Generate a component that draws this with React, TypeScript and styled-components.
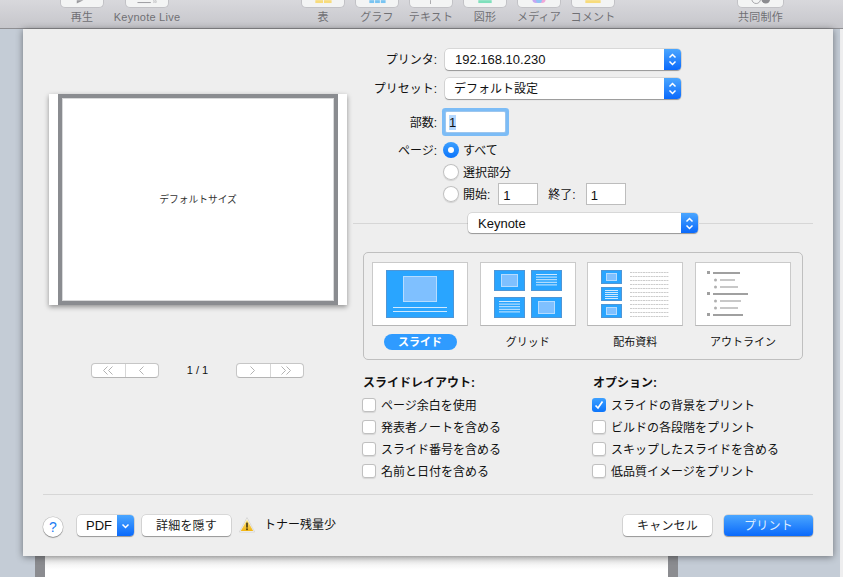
import React from "react";
import styled, { createGlobalStyle } from "styled-components";

const GlobalStyle = createGlobalStyle`
  html, body {
    margin: 0;
    padding: 0;
    width: 843px;
    height: 577px;
    overflow: hidden;
    font-family: "Liberation Sans", "Noto Sans CJK JP", sans-serif;
    font-size: 12px;
    color: #111;
  }
  * {
    box-sizing: border-box;
  }
`;

const Page = styled.div`
  width: 843px;
  height: 577px;
  display: flex;
  flex-direction: column;
  overflow: hidden;
`;

/* Keynote window toolbar, cut off by the top of the screenshot */
const Toolbar = styled.div`
  height: 29px;
  display: flex;
  padding-left: 60px;
  padding-right: 58px;
  background: linear-gradient(#d8d8dc, #c6c6cb);
  border-bottom: 1px solid #8e8e92;
`;

const ToolItem = styled.div<{ $width?: number; $left?: number }>`
  width: ${({ $width }) => $width ?? 44}px;
  margin-left: ${({ $left }) => $left ?? 0}px;
  display: flex;
  flex-direction: column;
  align-items: center;
`;

const ToolButton = styled.div`
  width: 100%;
  height: 8px;
  display: flex;
  justify-content: center;
  background: #f3f4f4;
  border: 1px solid #c2c2c6;
  border-top: none;
  border-radius: 0 0 5px 5px;
  overflow: hidden;
`;

const ToolLabel = styled.span`
  margin-top: 2px;
  font-size: 11px;
  line-height: 14px;
  letter-spacing: 0.25px;
  white-space: nowrap;
  color: #707074;
`;

const Stage = styled.div`
  flex: 1;
  display: flex;
  flex-direction: column;
  background: linear-gradient(to right, #c4ccd6 840px, #eeeeef 840px);
`;

const Dialog = styled.div`
  position: relative;
  z-index: 1;
  width: 810px;
  height: 527px;
  margin-left: 23px;
  padding: 0 20px;
  background: #eeeeee;
  box-shadow: 0 1px 7px rgba(0, 0, 0, 0.45);
`;

const SlidePeek = styled.div`
  width: 643px;
  height: 21px;
  margin-left: 35px;
  background: linear-gradient(#e6e6e6, #ffffff 14px);
  border-left: 10px solid #8b8c90;
  border-right: 10px solid #8b8c90;
`;

const Main = styled.div`
  height: 465px;
  display: flex;
`;

const PreviewColumn = styled.div`
  width: 310px;
  padding-top: 65px;
  padding-left: 6px;
`;

const PreviewSheet = styled.div`
  width: 298px;
  height: 211px;
  padding: 0 9px;
  background: #fff;
  box-shadow: 0 2px 5px rgba(0, 0, 0, 0.4);
`;

const PreviewFrame = styled.div`
  height: 100%;
  padding-bottom: 2px;
  display: flex;
  align-items: center;
  justify-content: center;
  border: 4px solid #8a8c90;
  box-shadow: inset 0 0 0 1px #d9dadb;
  font-size: 9.75px;
  color: #333;
`;

const Pager = styled.div`
  margin-top: 55px;
  margin-left: 42px;
  display: flex;
  align-items: center;
`;

const PagerGroup = styled.div`
  width: 68px;
  height: 15px;
  display: flex;
  background: #fff;
  border: 1px solid #c6c6c6;
  border-bottom-color: #b4b4b4;
  border-radius: 4px;
`;

const PagerButton = styled.div`
  flex: 1;
  display: flex;
  align-items: center;
  justify-content: center;
  & + & {
    border-left: 1px solid #d6d6d6;
  }
`;

const PagerCount = styled.span`
  width: 77px;
  text-align: center;
  font-size: 11px;
  line-height: 20px;
`;

const SettingsColumn = styled.div`
  width: 460px;
  padding-top: 20px;
`;

const FormRow = styled.div<{ $top?: number; $height?: number }>`
  display: grid;
  grid-template-columns: 84px 1fr;
  column-gap: 8px;
  align-items: center;
  height: ${({ $height }) => $height ?? 21}px;
  margin-top: ${({ $top }) => $top ?? 0}px;
`;

const FormLabel = styled.label`
  padding-bottom: 2px;
  text-align: right;
  white-space: nowrap;
`;

const Popup = styled.div<{ $width: number; $height?: number; $size?: number; $inset?: number }>`
  width: ${({ $width }) => $width}px;
  height: ${({ $height }) => $height ?? 21}px;
  display: flex;
  align-items: center;
  justify-content: space-between;
  padding-left: ${({ $inset }) => $inset ?? 10}px;
  background: #fff;
  border-radius: 4px;
  font-size: ${({ $size }) => $size ?? 13}px;
  box-shadow: 0 0 0 0.5px rgba(0, 0, 0, 0.18), 0 1px 1px rgba(0, 0, 0, 0.3);
  overflow: hidden;
`;

/* CJK glyphs sit a pixel low in Noto compared with the reference */
const Lifted = styled.span`
  padding-bottom: 2px;
`;

const PopupStepper = styled.span`
  width: 17px;
  height: 100%;
  display: flex;
  align-items: center;
  justify-content: center;
  background: linear-gradient(#4aa6ff, #0a69fb);
`;

const CopiesField = styled.div`
  width: 59px;
  height: 20px;
  margin-left: 1px;
  padding: 0 3px;
  display: flex;
  align-items: center;
  background: #fff;
  font-size: 13px;
  box-shadow: 0 0 0 1px #9dc6ee, 0 0 0 4px #7cbcf6;
  border-radius: 1px;
`;

const Selected = styled.span`
  background: #b4d7fe;
`;

const RadioRow = styled.div`
  display: flex;
  align-items: center;
  margin-left: -2px;
`;

const Radio = styled.span<{ $on?: boolean }>`
  width: 16px;
  height: 16px;
  flex: none;
  margin-right: 4px;
  display: flex;
  align-items: center;
  justify-content: center;
  border-radius: 50%;
  background: ${({ $on }) => ($on ? "linear-gradient(#3da0ff, #0b74fb)" : "#fff")};
  box-shadow: ${({ $on }) =>
    $on ? "none" : "inset 0 0 0 1px #c0c0c0, 0 1px 1px rgba(0, 0, 0, 0.12)"};
  &::after {
    content: "";
    display: ${({ $on }) => ($on ? "block" : "none")};
    width: 6px;
    height: 6px;
    border-radius: 50%;
    background: #fff;
  }
`;

const RangeField = styled.div`
  width: 40px;
  height: 22px;
  margin-left: 8px;
  padding: 2px 0 0 4px;
  display: flex;
  align-items: center;
  background: #fff;
  border: 1px solid #bdbdbd;
  font-size: 13px;
`;

const RangeLabel = styled.span`
  margin-left: 10px;
  margin-right: 2px;
  padding-bottom: 2px;
`;

const SectionRule = styled.div`
  margin-top: 8px;
  display: flex;
  align-items: center;
  &::before,
  &::after {
    content: "";
    flex: 1;
    height: 1px;
    background: #d6d6d6;
  }
`;

const LayoutBox = styled.div`
  width: 440px;
  height: 108px;
  margin-top: 19px;
  margin-left: 10px;
  padding: 9px 11px 0 8px;
  display: flex;
  justify-content: space-between;
  background: #efefef;
  border: 1px solid #bfbfbf;
  border-radius: 5px;
`;

const LayoutChoice = styled.div`
  width: 96px;
  display: flex;
  flex-direction: column;
  align-items: center;
`;

const Thumb = styled.div`
  width: 96px;
  height: 64px;
  background: #fff;
  border: 1px solid #cacaca;
  border-bottom-color: #b6b6b6;
  svg {
    display: block;
    margin: -1px;
  }
`;

const ChoiceLabel = styled.span<{ $active?: boolean }>`
  width: ${({ $active }) => ($active ? "73px" : "auto")};
  height: 16px;
  margin-top: 8px;
  border-radius: 8px;
  text-align: center;
  font-size: 11px;
  line-height: 17px;
  font-weight: ${({ $active }) => ($active ? 700 : 400)};
  color: ${({ $active }) => ($active ? "#fff" : "#111")};
  background: ${({ $active }) => ($active ? "#2f9bff" : "transparent")};
`;

const OptionGrid = styled.div`
  margin-top: 15px;
  margin-left: 9px;
  display: grid;
  grid-template-columns: 230px 1fr;
`;

const OptionColumn = styled.div`
  display: flex;
  flex-direction: column;
`;

const OptionHeading = styled.div`
  height: 16px;
  margin-bottom: 3px;
  padding-left: 1px;
  font-weight: 700;
  line-height: 16px;
`;

const OptionRow = styled.div`
  height: 22px;
  display: flex;
  align-items: center;
  white-space: nowrap;
`;

const Checkbox = styled.span<{ $on?: boolean }>`
  width: 14px;
  height: 14px;
  flex: none;
  margin-right: 5px;
  display: flex;
  align-items: center;
  justify-content: center;
  border-radius: 3px;
  background: ${({ $on }) => ($on ? "linear-gradient(#3da0ff, #0b74fb)" : "#fff")};
  box-shadow: ${({ $on }) =>
    $on ? "none" : "inset 0 0 0 1px #c0c0c0, 0 1px 1px rgba(0, 0, 0, 0.1)"};
`;

const Footer = styled.div`
  padding-top: 20px;
  display: flex;
  align-items: flex-start;
  border-top: 1px solid #d6d6d6;
`;

const HelpButton = styled.div`
  width: 20px;
  height: 20px;
  margin-top: 2px;
  margin-right: 14px;
  display: flex;
  align-items: center;
  justify-content: center;
  border-radius: 50%;
  background: #fff;
  color: #1c7cf2;
  font-size: 14px;
  box-shadow: 0 0 0 0.5px rgba(0, 0, 0, 0.2), 0 1px 1px rgba(0, 0, 0, 0.3);
`;

const PdfButton = styled.div`
  width: 57px;
  height: 21px;
  display: flex;
  align-items: center;
  justify-content: space-between;
  padding-left: 9px;
  margin-right: 8px;
  background: #fff;
  border-radius: 4px;
  font-size: 13px;
  box-shadow: 0 0 0 0.5px rgba(0, 0, 0, 0.18), 0 1px 1px rgba(0, 0, 0, 0.3);
  overflow: hidden;
`;

const PushButton = styled.div<{ $primary?: boolean; $width: number }>`
  width: ${({ $width }) => $width}px;
  height: 21px;
  padding-bottom: 2px;
  display: flex;
  align-items: center;
  justify-content: center;
  border-radius: 4px;
  letter-spacing: 0.2px;
  color: ${({ $primary }) => ($primary ? "#dcebff" : "#222")};
  background: ${({ $primary }) =>
    $primary ? "linear-gradient(#4aa6ff, #0a69fb)" : "#fff"};
  box-shadow: 0 0 0 0.5px rgba(0, 0, 0, 0.18), 0 1px 1px rgba(0, 0, 0, 0.3);
`;

const WarningIcon = styled.svg`
  margin: 2px 9px 0 8px;
`;

const WarningText = styled.span`
  line-height: 21px;
`;

const FooterSpacer = styled.div`
  flex: 1;
`;

const ButtonGap = styled.div`
  width: 12px;
`;

const UpDown = () => (
  <svg width="9" height="15" viewBox="0 0 9 15" fill="none" stroke="#fff" strokeWidth="1.5">
    <path d="M1.5 5.5 4.5 2.5 7.5 5.5" />
    <path d="M1.5 9.5 4.5 12.5 7.5 9.5" />
  </svg>
);

const Chevrons = ({ dir, count }: { dir: "left" | "right"; count: number }) => (
  <svg width={count === 2 ? 13 : 8} height="9" viewBox={`0 0 ${count === 2 ? 13 : 8} 9`} fill="none" stroke="#b3b3b3">
    {Array.from({ length: count }).map((_, i) => (
      <path
        key={i}
        d={
          dir === "left"
            ? `M${5.5 + i * 5} 0.5 ${1.5 + i * 5} 4.5 ${5.5 + i * 5} 8.5`
            : `M${1.5 + i * 5} 0.5 ${5.5 + i * 5} 4.5 ${1.5 + i * 5} 8.5`
        }
      />
    ))}
  </svg>
);

const SLIDE = { fill: "#29a5ff", stroke: "#4f96d6", image: "#7fc0ff", edge: "#b6dcff" };

const Cell = ({ x, y, w, h }: { x: number; y: number; w: number; h: number }) => (
  <rect x={x + 0.5} y={y + 0.5} width={w - 1} height={h - 1} fill={SLIDE.fill} stroke={SLIDE.stroke} />
);

const Picture = ({ x, y, w, h }: { x: number; y: number; w: number; h: number }) => (
  <rect x={x + 0.5} y={y + 0.5} width={w - 1} height={h - 1} fill={SLIDE.image} stroke={SLIDE.edge} />
);

const TextLines = ({ x, w, from, to, step }: { x: number; w: number; from: number; to: number; step: number }) => {
  const lines: number[] = [];
  for (let y = from; y <= to; y += step) lines.push(y);
  return (
    <>
      {lines.map((y) => (
        <rect key={y} x={x} y={y} width={w} height={1} fill="#cfe9ff" />
      ))}
    </>
  );
};

const SlideThumb = () => (
  <svg width="96" height="64" viewBox="0 0 96 64">
    <Cell x={14} y={8} w={68} h={48} />
    <Picture x={31} y={14} w={34} h={26} />
    <TextLines x={21} w={54} from={45} to={49} step={4} />
  </svg>
);

const GridThumb = () => (
  <svg width="96" height="64" viewBox="0 0 96 64">
    <Cell x={14} y={8} w={31} h={21} />
    <Picture x={21} y={12} w={17} h={13} />
    <Cell x={51} y={8} w={31} h={21} />
    <TextLines x={56} w={21} from={12} to={25} step={2.6} />
    <Cell x={14} y={35} w={31} h={21} />
    <TextLines x={19} w={21} from={39} to={52} step={2.6} />
    <Cell x={51} y={35} w={31} h={21} />
    <Picture x={58} y={39} w={17} h={13} />
  </svg>
);

const HandoutThumb = () => {
  const rows: number[] = [];
  for (let y = 10; y <= 54; y += 4) rows.push(y);
  return (
    <svg width="96" height="64" viewBox="0 0 96 64">
      <Cell x={14} y={8} w={21} h={14} />
      <Picture x={19} y={11} w={11} h={8} />
      <Cell x={14} y={25} w={21} h={14} />
      <TextLines x={18} w={13} from={28} to={36} step={2} />
      <Cell x={14} y={42} w={21} h={14} />
      <Picture x={19} y={45} w={11} h={8} />
      {rows.map((y) => (
        <line key={y} x1={43} x2={82} y1={y + 0.5} y2={y + 0.5} stroke="#cccccc" strokeDasharray="2 0.6" />
      ))}
    </svg>
  );
};

const OUTLINE_MAIN = [
  { y: 9, w: 27 },
  { y: 30, w: 35 },
  { y: 51, w: 30 },
];

const OUTLINE_SUB = [
  { y: 17, w: 15 },
  { y: 24, w: 18 },
  { y: 38, w: 21 },
  { y: 45, w: 18 },
];

const OutlineThumb = () => (
  <svg width="96" height="64" viewBox="0 0 96 64">
    {OUTLINE_MAIN.map(({ y, w }) => (
      <g key={y} fill="#a0a0a0">
        <rect x={12} y={y} width={3} height={3} />
        <rect x={18} y={y + 1} width={w} height={2} />
      </g>
    ))}
    {OUTLINE_SUB.map(({ y, w }) => (
      <g key={y} fill="#c8c8c8">
        <circle cx={20.5} cy={y + 1} r={1.5} fill="#b0b0b0" />
        <rect x={25} y={y} width={w} height={2} />
      </g>
    ))}
  </svg>
);

const TOOLS: { label: string; width?: number; left?: number; glyph: React.ReactNode }[] = [
  {
    label: "再生",
    glyph: (
      <svg width="44" height="8" viewBox="0 0 44 8">
        <path d="M16.5 0h7l-7 3.5z" fill="#9a9a9e" />
      </svg>
    ),
  },
  {
    label: "Keynote Live",
    left: 21,
    glyph: (
      <svg width="44" height="8" viewBox="0 0 44 8">
        <rect x="12" y="2" width="14" height="1" fill="#9a9a9e" />
        <path d="M29 0c.6 1 .6 2 0 3M31 0c.6 1 .6 2 0 3" stroke="#b4b4b8" fill="none" />
      </svg>
    ),
  },
  {
    label: "表",
    left: 132,
    glyph: (
      <svg width="44" height="8" viewBox="0 0 44 8">
        <rect x="14" y="0" width="8" height="3" fill="#f8dc7c" />
        <rect x="23" y="0" width="8" height="3" fill="#f8dc7c" />
      </svg>
    ),
  },
  {
    label: "グラフ",
    left: 10,
    glyph: (
      <svg width="44" height="8" viewBox="0 0 44 8">
        <rect x="14" y="0" width="5" height="3" fill="#78c4f2" />
        <rect x="20" y="0" width="5" height="3" fill="#78c4f2" />
        <rect x="26" y="0" width="5" height="3" fill="#78c4f2" />
      </svg>
    ),
  },
  {
    label: "テキスト",
    left: 10,
    glyph: (
      <svg width="44" height="8" viewBox="0 0 44 8">
        <rect x="21" y="0" width="1" height="4" fill="#a8a8ac" />
      </svg>
    ),
  },
  {
    label: "図形",
    left: 10,
    glyph: (
      <svg width="44" height="8" viewBox="0 0 44 8">
        <rect x="15" y="0" width="14" height="3" fill="#7fe0bc" />
      </svg>
    ),
  },
  {
    label: "メディア",
    left: 10,
    glyph: (
      <svg width="44" height="8" viewBox="0 0 44 8">
        <circle cx="19" cy="-1" r="4" fill="#c6a6f2" />
        <circle cx="25" cy="-1" r="4" fill="#f0a8d8" />
        <circle cx="22" cy="0" r="3" fill="#90c4f6" />
      </svg>
    ),
  },
  {
    label: "コメント",
    left: 10,
    glyph: (
      <svg width="44" height="8" viewBox="0 0 44 8">
        <rect x="14" y="0" width="16" height="3" fill="#f8dc7c" />
      </svg>
    ),
  },
  {
    label: "共同制作",
    width: 47,
    left: 122,
    glyph: (
      <svg width="47" height="8" viewBox="0 0 47 8">
        <circle cx="19" cy="-1" r="4.5" fill="none" stroke="#a4a4a8" />
        <circle cx="29" cy="-1" r="4.5" fill="#8c8c90" />
      </svg>
    ),
  },
];

const LAYOUT_CHOICES = [
  { label: "スライド", thumb: <SlideThumb />, active: true },
  { label: "グリッド", thumb: <GridThumb /> },
  { label: "配布資料", thumb: <HandoutThumb /> },
  { label: "アウトライン", thumb: <OutlineThumb /> },
];

const SLIDE_LAYOUT_OPTIONS = [
  "ページ余白を使用",
  "発表者ノートを含める",
  "スライド番号を含める",
  "名前と日付を含める",
];

const PRINT_OPTIONS = [
  "スライドの背景をプリント",
  "ビルドの各段階をプリント",
  "スキップしたスライドを含める",
  "低品質イメージをプリント",
];

export default function App(): JSX.Element {
  return (
    <Page>
      <GlobalStyle />
      <Toolbar>
        {TOOLS.map((tool) => (
          <ToolItem key={tool.label} $width={tool.width} $left={tool.left}>
            <ToolButton>{tool.glyph}</ToolButton>
            <ToolLabel>{tool.label}</ToolLabel>
          </ToolItem>
        ))}
      </Toolbar>
      <Stage>
        <Dialog>
          <Main>
            <PreviewColumn>
              <PreviewSheet>
                <PreviewFrame>デフォルトサイズ</PreviewFrame>
              </PreviewSheet>
              <Pager>
                <PagerGroup>
                  <PagerButton>
                    <Chevrons dir="left" count={2} />
                  </PagerButton>
                  <PagerButton>
                    <Chevrons dir="left" count={1} />
                  </PagerButton>
                </PagerGroup>
                <PagerCount>1 / 1</PagerCount>
                <PagerGroup>
                  <PagerButton>
                    <Chevrons dir="right" count={1} />
                  </PagerButton>
                  <PagerButton>
                    <Chevrons dir="right" count={2} />
                  </PagerButton>
                </PagerGroup>
              </Pager>
            </PreviewColumn>
            <SettingsColumn>
              <FormRow>
                <FormLabel>プリンタ:</FormLabel>
                <Popup $width={236}>
                  192.168.10.230
                  <PopupStepper>
                    <UpDown />
                  </PopupStepper>
                </Popup>
              </FormRow>
              <FormRow $top={8}>
                <FormLabel>プリセット:</FormLabel>
                <Popup $width={236} $size={12} $inset={9}>
                  <Lifted>デフォルト設定</Lifted>
                  <PopupStepper>
                    <UpDown />
                  </PopupStepper>
                </Popup>
              </FormRow>
              <FormRow $top={13} $height={20}>
                <FormLabel>部数:</FormLabel>
                <CopiesField>
                  <Selected>1</Selected>
                </CopiesField>
              </FormRow>
              <FormRow $top={7} $height={22}>
                <FormLabel>ページ:</FormLabel>
                <RadioRow>
                  <Radio $on />
                  <Lifted>すべて</Lifted>
                </RadioRow>
              </FormRow>
              <FormRow $height={22}>
                <span />
                <RadioRow>
                  <Radio />
                  <Lifted>選択部分</Lifted>
                </RadioRow>
              </FormRow>
              <FormRow $height={22}>
                <span />
                <RadioRow>
                  <Radio />
                  <Lifted>開始:</Lifted>
                  <RangeField>1</RangeField>
                  <RangeLabel>終了:</RangeLabel>
                  <RangeField>1</RangeField>
                </RadioRow>
              </FormRow>
              <SectionRule>
                <Popup $width={230} $height={20}>
                  Keynote
                  <PopupStepper>
                    <UpDown />
                  </PopupStepper>
                </Popup>
              </SectionRule>
              <LayoutBox>
                {LAYOUT_CHOICES.map((choice) => (
                  <LayoutChoice key={choice.label}>
                    <Thumb>{choice.thumb}</Thumb>
                    <ChoiceLabel $active={choice.active}>{choice.label}</ChoiceLabel>
                  </LayoutChoice>
                ))}
              </LayoutBox>
              <OptionGrid>
                <OptionColumn>
                  <OptionHeading>スライドレイアウト:</OptionHeading>
                  {SLIDE_LAYOUT_OPTIONS.map((text) => (
                    <OptionRow key={text}>
                      <Checkbox />
                      <Lifted>{text}</Lifted>
                    </OptionRow>
                  ))}
                </OptionColumn>
                <OptionColumn>
                  <OptionHeading>オプション:</OptionHeading>
                  {PRINT_OPTIONS.map((text, i) => (
                    <OptionRow key={text}>
                      <Checkbox $on={i === 0}>
                        {i === 0 && (
                          <svg width="10" height="10" viewBox="0 0 10 10" fill="none" stroke="#fff" strokeWidth="1.7">
                            <path d="M1.5 5.5 4 8 8.5 1.5" />
                          </svg>
                        )}
                      </Checkbox>
                      <Lifted>{text}</Lifted>
                    </OptionRow>
                  ))}
                </OptionColumn>
              </OptionGrid>
            </SettingsColumn>
          </Main>
          <Footer>
            <HelpButton>?</HelpButton>
            <PdfButton>
              PDF
              <PopupStepper>
                <svg width="9" height="6" viewBox="0 0 9 6" fill="none" stroke="#fff" strokeWidth="1.5">
                  <path d="M1.5 1.5 4.5 4.5 7.5 1.5" />
                </svg>
              </PopupStepper>
            </PdfButton>
            <PushButton $width={89}>詳細を隠す</PushButton>
            <WarningIcon width="16" height="16" viewBox="0 0 16 16">
              <defs>
                <linearGradient id="warnFill" x1="0" y1="0" x2="0" y2="1">
                  <stop offset="0" stopColor="#fbe68a" />
                  <stop offset="1" stopColor="#f2b410" />
                </linearGradient>
              </defs>
              <path d="M8 .6 15.6 15H.4z" fill="#fafafa" stroke="#cdcdcd" strokeWidth="0.7" strokeLinejoin="round" />
              <path d="M8 2.6 14.2 14H1.8z" fill="url(#warnFill)" />
              <rect x="7.2" y="5.6" width="1.6" height="5" fill="#3f3410" />
              <rect x="7.2" y="11.4" width="1.6" height="1.7" fill="#3f3410" />
            </WarningIcon>
            <WarningText>トナー残量少</WarningText>
            <FooterSpacer />
            <PushButton $width={89}>キャンセル</PushButton>
            <ButtonGap />
            <PushButton $width={89} $primary>
              プリント
            </PushButton>
          </Footer>
        </Dialog>
        <SlidePeek />
      </Stage>
    </Page>
  );
}
